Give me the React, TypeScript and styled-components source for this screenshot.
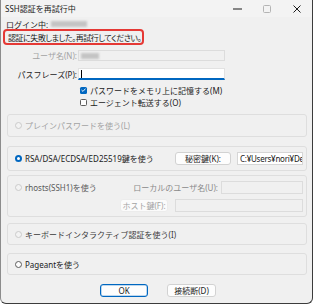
import * as React from "react"
import styled, { createGlobalStyle, css } from "styled-components"

const GlobalStyle = createGlobalStyle`
  html, body {
    margin: 0;
    padding: 0;
    background: #ffffff;
  }
  body {
    font-family: "Noto Sans", "Noto Sans CJK JP", sans-serif;
    font-size: 8px;
    color: #1b1b1b;
  }
`

const Window = styled.div`
  width: 313px;
  height: 304px;
  box-sizing: border-box;
  background: #f0f0f0;
  border: 1px solid #8c8c8c;
  border-top: none;
  border-right-color: #3c3c3c;
  border-bottom-color: #3c3c3c;
  border-radius: 0 0 6px 6px;
  display: flex;
  flex-direction: column;
  overflow: hidden;
`

const TitleBar = styled.div`
  height: 17px;
  display: flex;
  align-items: center;
  padding-left: 4px;
  background: #f3f3f3;
`

const Title = styled.span`
  flex: 1;
`

const Control = styled.div`
  width: 30px;
  height: 17px;
  display: flex;
  align-items: center;
  justify-content: center;
`

const Line = styled.div<{ $top: number }>`
  display: flex;
  align-items: center;
  margin-top: ${(p) => p.$top}px;
`

const LoginRow = styled(Line)`
  height: 10px;
  padding-left: 5px;
  gap: 3px;
`

const Blur = styled.span<{ $w: number }>`
  display: inline-block;
  width: ${(p) => p.$w}px;
  height: 6px;
  background: #c4c4c4;
  filter: blur(1.2px);
`

const ErrorBox = styled(Line)`
  margin-left: 2px;
  width: 141px;
  height: 16px;
  box-sizing: border-box;
  border: 2px solid #e53935;
  border-radius: 4px;
  padding-left: 3px;
  white-space: nowrap;
  font-feature-settings: "palt";
  letter-spacing: -0.45px;
`

const FieldRow = styled.div<{ $top: number; $h: number }>`
  display: grid;
  grid-template-columns: 76px 147px;
  column-gap: 1px;
  align-items: center;
  height: ${(p) => p.$h}px;
  margin-top: ${(p) => p.$top}px;
`

const FieldLabel = styled.span<{ $disabled?: boolean }>`
  text-align: right;
  white-space: nowrap;
  color: ${(p) => (p.$disabled ? "#a3a3a3" : "#1b1b1b")};
`

const Input = styled.div<{ $variant?: "focus" | "disabled" | "plain" }>`
  height: 100%;
  box-sizing: border-box;
  display: flex;
  align-items: center;
  padding-left: 2px;
  overflow: hidden;
  white-space: nowrap;
  letter-spacing: -0.25px;
  ${(p) =>
    p.$variant === "focus"
      ? css`
          background: #ffffff;
          border: 1px solid #e2e2e2;
          border-bottom: 2px solid #0067c0;
        `
      : p.$variant === "disabled"
        ? css`
            background: transparent;
            border: 1px solid #dcdcdc;
          `
        : css`
            background: #ffffff;
            border: 1px solid #d6d6d6;
          `}
`

const Caret = styled.span`
  width: 1px;
  height: 8px;
  background: #000;
`

const CheckRow = styled(Line)`
  height: 8px;
  padding-left: 79px;
  gap: 3px;
`

const Box = styled.span<{ $checked?: boolean }>`
  width: 7px;
  height: 7px;
  box-sizing: border-box;
  border-radius: 1.5px;
  display: flex;
  align-items: center;
  justify-content: center;
  ${(p) =>
    p.$checked
      ? css`
          background: #0067c0;
        `
      : css`
          background: #fdfdfd;
          border: 1px solid #5c5c5c;
        `}
`

const Group = styled.div<{ $top: number; $h: number }>`
  margin-top: ${(p) => p.$top}px;
  margin-left: 6px;
  width: 300px;
  height: ${(p) => p.$h}px;
  box-sizing: border-box;
  border: 1px solid #dedede;
  border-radius: 3px;
  padding: 0 3px 0 7px;
  display: flex;
  flex-direction: column;
  justify-content: center;
  gap: 6px;
`

const GroupRow = styled.div`
  height: 12px;
  display: flex;
  align-items: center;
`

const Radio = styled.span<{ $state: "on" | "off" | "disabled" }>`
  width: 7px;
  height: 7px;
  box-sizing: border-box;
  border-radius: 50%;
  margin-right: 3px;
  ${(p) =>
    p.$state === "on"
      ? css`
          border: 2.3px solid #0067c0;
          background: #ffffff;
        `
      : p.$state === "off"
        ? css`
            border: 1px solid #5c5c5c;
            background: #fdfdfd;
          `
        : css`
            border: 1px solid #cbcbcb;
            background: #f3f3f3;
          `}
`

const Label = styled.span<{ $tone?: string }>`
  color: ${(p) => p.$tone ?? "#1b1b1b"};
  white-space: nowrap;
`

const Spacer = styled.span<{ $w?: number }>`
  ${(p) =>
    p.$w
      ? css`
          flex: none;
          width: ${p.$w}px;
        `
      : css`
          flex: 1;
        `}
`

const Button = styled.div<{ $w: number; $kind?: "default" | "disabled" | "normal" }>`
  width: ${(p) => p.$w}px;
  height: 13px;
  box-sizing: border-box;
  border-radius: 3px;
  display: flex;
  align-items: center;
  justify-content: center;
  white-space: nowrap;
  ${(p) =>
    p.$kind === "default"
      ? css`
          background: #fdfdfd;
          border: 1px solid #0067c0;
          box-shadow: inset 0 0 0 0.5px #7fb2e0;
        `
      : p.$kind === "disabled"
        ? css`
            background: #fbfbfb;
            border: 1px solid #ececec;
            color: #a3a3a3;
          `
        : css`
            background: #fdfdfd;
            border: 1px solid #d2d2d2;
          `}
`

const SizedInput = styled(Input)<{ $w: number }>`
  width: ${(p) => p.$w}px;
  height: 13px;
  flex: none;
`

const ButtonBar = styled(Line)`
  padding-left: 99px;
  gap: 19px;
`

const App = () => (
  <>
    <GlobalStyle />
    <Window>
      <TitleBar>
        <Title>SSH認証を再試行中</Title>
        <Control>
          <svg width="9" height="2" viewBox="0 0 9 2">
            <rect x="0" y="0.5" width="9" height="1" fill="#1b1b1b" />
          </svg>
        </Control>
        <Control>
          <svg width="8" height="8" viewBox="0 0 8 8">
            <rect x="0.5" y="0.5" width="7" height="7" rx="1" fill="none" stroke="#b4b4b4" />
          </svg>
        </Control>
        <Control>
          <svg width="8" height="8" viewBox="0 0 8 8">
            <path d="M0.5 0.5L7.5 7.5M7.5 0.5L0.5 7.5" stroke="#1b1b1b" strokeWidth="1" />
          </svg>
        </Control>
      </TitleBar>

      <LoginRow $top={2}>
        <Label>ログイン中:</Label>
        <Blur $w={36} />
      </LoginRow>

      <ErrorBox $top={0}>認証に失敗しました。再試行してください。</ErrorBox>

      <FieldRow $top={5} $h={10}>
        <FieldLabel $disabled>ユーザ名(N):</FieldLabel>
        <Input $variant="disabled">
          <Blur $w={18} />
        </Input>
      </FieldRow>

      <FieldRow $top={8} $h={12}>
        <FieldLabel>パスフレーズ(P):</FieldLabel>
        <Input $variant="focus">
          <Caret />
        </Input>
      </FieldRow>

      <CheckRow $top={6}>
        <Box $checked>
          <svg width="5" height="4" viewBox="0 0 5 4">
            <path d="M0.5 2L2 3.4L4.5 0.6" fill="none" stroke="#fff" strokeWidth="0.9" />
          </svg>
        </Box>
        <Label>パスワードをメモリ上に記憶する(M)</Label>
      </CheckRow>

      <CheckRow $top={4}>
        <Box />
        <Label>エージェント転送する(O)</Label>
      </CheckRow>

      <Group $top={8} $h={23}>
        <GroupRow>
          <Radio $state="disabled" />
          <Label $tone="#a3a3a3">プレインパスワードを使う(L)</Label>
        </GroupRow>
      </Group>

      <Group $top={9} $h={25}>
        <GroupRow>
          <Radio $state="on" />
          <Label>RSA/DSA/ECDSA/ED25519鍵を使う</Label>
          <Spacer />
          <Button $w={56}>秘密鍵(K):</Button>
          <Spacer $w={6} />
          <SizedInput $w={66}>C:¥Users¥nori¥De</SizedInput>
        </GroupRow>
      </Group>

      <Group $top={4} $h={42}>
        <GroupRow>
          <Radio $state="disabled" />
          <Label $tone="#5a5a5a">rhosts(SSH1)を使う</Label>
          <Spacer />
          <Label $tone="#8a8a8a">ローカルのユーザ名(U):</Label>
          <Spacer $w={3} />
          <SizedInput $w={82} $variant="disabled" />
        </GroupRow>
        <GroupRow>
          <Spacer />
          <Button $w={48} $kind="disabled">
            ホスト鍵(F):
          </Button>
          <Spacer $w={7} />
          <SizedInput $w={128} $variant="disabled" />
        </GroupRow>
      </Group>

      <Group $top={6} $h={22}>
        <GroupRow>
          <Radio $state="disabled" />
          <Label $tone="#3a3a3a">キーボードインタラクティブ認証を使う(I)</Label>
        </GroupRow>
      </Group>

      <Group $top={8} $h={22}>
        <GroupRow>
          <Radio $state="off" />
          <Label>Pageantを使う</Label>
        </GroupRow>
      </Group>

      <ButtonBar $top={9}>
        <Button $w={48} $kind="default">
          OK
        </Button>
        <Button $w={49}>接続断(D)</Button>
      </ButtonBar>
    </Window>
  </>
)

export default App
